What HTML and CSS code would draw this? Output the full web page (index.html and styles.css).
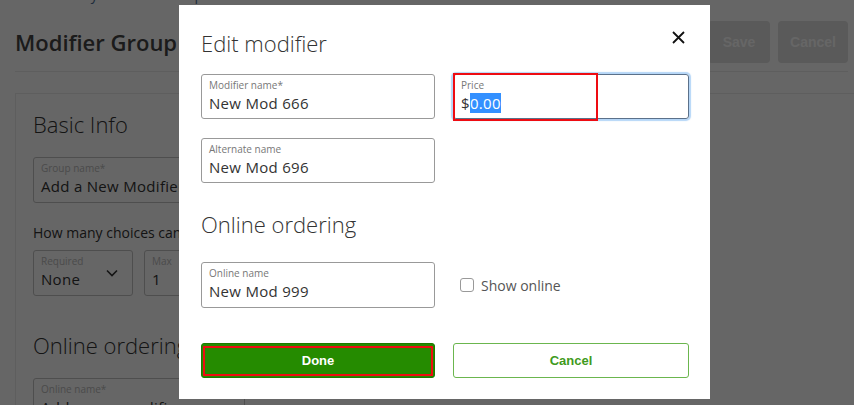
FILE: index.html
```html
<!DOCTYPE html>
<html lang="en">
<head>
    <meta charset="UTF-8">
    <meta name="viewport" content="width=device-width, initial-scale=1.0">
    <title>Edit modifier</title>
    <link rel="stylesheet" href="styles.css">
</head>
<body>
    <!-- Page underneath the dialog -->
    <div class="page">
        <div class="breadcrumb">/ Inventory/Modifier Groups</div>
        <div class="page-header">
            <h1 class="page-title">Modifier Group - Add a New Modifier Group</h1>
            <div class="header-actions">
                <button class="header-btn save">Save</button>
                <button class="header-btn cancel">Cancel</button>
            </div>
        </div>

        <div class="card">
            <h2 class="section-title">Basic Info</h2>
            <div class="bg-field wide">
                <div class="field-label">Group name*</div>
                <div class="field-value">Add a New Modifier Group</div>
            </div>

            <p class="question">How many choices can customers make?</p>
            <div class="choice-row">
                <div class="bg-field select">
                    <div class="field-label">Required</div>
                    <div class="field-value">None</div>
                    <svg class="chevron" width="12" height="8" viewBox="0 0 12 8">
                        <path d="M1 1.5l5 5 5-5" fill="none" stroke="#333" stroke-width="1.6"/>
                    </svg>
                </div>
                <div class="bg-field select">
                    <div class="field-label">Max</div>
                    <div class="field-value">1</div>
                </div>
            </div>

            <h2 class="section-title online">Online ordering</h2>
            <div class="bg-field mid">
                <div class="field-label">Online name*</div>
                <div class="field-value">Add a new modifier</div>
            </div>
        </div>
    </div>

    <div class="overlay"></div>

    <!-- Edit modifier dialog -->
    <div class="modal">
        <div class="modal-header">
            <h3 class="modal-title">Edit modifier</h3>
            <button class="close-btn" aria-label="Close">
                <svg width="13" height="13" viewBox="0 0 13 13">
                    <path d="M1 1l11 11M12 1L1 12" stroke="#111" stroke-width="1.8"/>
                </svg>
            </button>
        </div>

        <div class="field-grid">
            <div class="field">
                <div class="field-label">Modifier name*</div>
                <div class="field-value">New Mod 666</div>
            </div>
            <div class="field focused">
                <div class="field-label">Price</div>
                <div class="field-value">$<span class="selected">0.00</span></div>
                <div class="mark price-mark"></div>
            </div>
            <div class="field">
                <div class="field-label">Alternate name</div>
                <div class="field-value">New Mod 696</div>
            </div>
        </div>

        <h3 class="modal-title sub">Online ordering</h3>

        <div class="field-grid online-row">
            <div class="field tall">
                <div class="field-label">Online name</div>
                <div class="field-value">New Mod 999</div>
            </div>
            <label class="checkbox">
                <span class="box"></span>
                Show online
            </label>
        </div>

        <div class="field-grid actions">
            <button class="btn btn-done">Done<span class="mark done-mark"></span></button>
            <button class="btn btn-cancel">Cancel</button>
        </div>
    </div>
</body>
</html>
```

FILE: styles.css
```css
html, body {
    overflow: hidden;
}

body {
    margin: 0;
    width: 854px;
    height: 405px;
    background: #fff;
    font-family: "Open Sans", Arial, sans-serif;
}

/* Background page */
.page {
    height: 405px;
    padding: 0 6px 0 15px;
    overflow: hidden;
}

.breadcrumb {
    margin-top: -14px;
    padding-left: 12px;
    font-size: 14px;
    line-height: 18px;
    color: #4d6f93;
}

.page-header {
    display: flex;
    justify-content: space-between;
    align-items: center;
    box-sizing: border-box;
    height: 68px;
    padding-top: 9px;
    border-bottom: 1px solid #ebebeb;
}

.page-title {
    margin: 0;
    font-size: 22px;
    font-weight: 600;
    line-height: 30px;
    color: #444;
    white-space: nowrap;
}

.header-actions {
    display: flex;
    gap: 8px;
}

.header-btn {
    height: 42px;
    padding: 0;
    border: none;
    border-radius: 4px;
    background: #e0e0e0;
    color: #fff;
    font-family: "Liberation Sans", Arial, sans-serif;
    font-size: 14px;
    font-weight: bold;
}

.header-btn.save { width: 62px; }
.header-btn.cancel { width: 70px; }

.card {
    margin-top: 21px;
    margin-right: -10px;
    height: 400px;
    padding: 0 17px;
    border: 1px solid #ebebeb;
}

.section-title {
    margin: 15px 0 0;
    font-size: 22px;
    font-weight: 300;
    line-height: 30px;
    color: #333;
}

.section-title.online {
    margin-top: 34px;
}

.bg-field {
    position: relative;
    box-sizing: border-box;
    height: 46px;
    padding: 4px 7px 0;
    border: 1px solid #c2c2c2;
    border-radius: 3px;
    white-space: nowrap;
}

.bg-field.wide { width: 400px; margin-top: 18px; }
.bg-field.mid { width: 212px; margin-top: 18px; }
.bg-field.select { width: 100px; }
.bg-field .field-label { color: #bbb; }
.bg-field .field-value { color: #333; }

.chevron {
    position: absolute;
    right: 14px;
    top: 18px;
}

.question {
    margin: 20px 0 8px;
    font-size: 14px;
    line-height: 19px;
    color: #333;
    white-space: nowrap;
}

.choice-row {
    display: flex;
    gap: 11px;
}

.choice-row .select:last-child { width: 120px; }

.overlay {
    position: fixed;
    inset: 0;
    background: rgba(0, 0, 0, 0.6);
}

/* Dialog */
.modal {
    position: fixed;
    left: 179px;
    top: 5px;
    width: 531px;
    height: 394px;
    box-sizing: border-box;
    padding: 23px 21px 0 22px;
    background: #fff;
}

.modal-header {
    display: flex;
    justify-content: space-between;
    align-items: flex-start;
}

.modal-title {
    margin: 0;
    font-size: 22px;
    font-weight: 300;
    line-height: 30px;
    color: #333;
}

.modal-title.sub {
    margin-top: 26px;
}

.close-btn {
    margin: 3px 4px 0 0;
    padding: 0;
    border: none;
    background: none;
    line-height: 0;
}

.field-grid {
    display: grid;
    grid-template-columns: 234px 236px;
    column-gap: 18px;
    row-gap: 19px;
    margin-top: 16px;
}

.field {
    position: relative;
    box-sizing: border-box;
    height: 45px;
    padding: 4px 7px 0;
    border: 1px solid #999;
    border-radius: 3px;
}

.field.tall { height: 46px; }

.field.focused {
    border-color: #5b718a;
    box-shadow: 0 0 1px 2px rgba(120, 180, 240, 0.55);
}

.field-label {
    font-size: 10px;
    line-height: 12px;
    color: #777;
}

.field-value {
    margin-top: 2px;
    font-size: 15px;
    line-height: 20px;
    letter-spacing: 0.3px;
    color: #333;
}

.selected {
    background: #3390ff;
    color: #fff;
}

.mark {
    position: absolute;
    box-sizing: border-box;
    border: 2px solid #ee0c12;
}

.price-mark {
    left: -1px;
    top: -2px;
    width: 145px;
    height: 48px;
}

.online-row {
    margin-top: 23px;
    align-items: center;
}

.checkbox {
    display: flex;
    align-items: center;
    gap: 7px;
    padding-left: 7px;
    font-size: 14px;
    color: #555;
}

.box {
    width: 14px;
    height: 14px;
    box-sizing: border-box;
    border: 1.5px solid #999;
    border-radius: 3px;
}

.actions {
    margin-top: 35px;
}

.btn {
    position: relative;
    height: 35px;
    border-radius: 3px;
    font-family: "Liberation Sans", Arial, sans-serif;
    font-size: 13px;
    font-weight: bold;
    cursor: pointer;
}

.btn-done {
    border: 1px solid #1d7a00;
    background: #258b00;
    color: #fff;
}

.btn-cancel {
    border: 1px solid #6bb64e;
    background: #fff;
    color: #3f9a20;
}

.done-mark {
    left: 1px;
    right: 1px;
    top: 2px;
    bottom: 1px;
}
```
